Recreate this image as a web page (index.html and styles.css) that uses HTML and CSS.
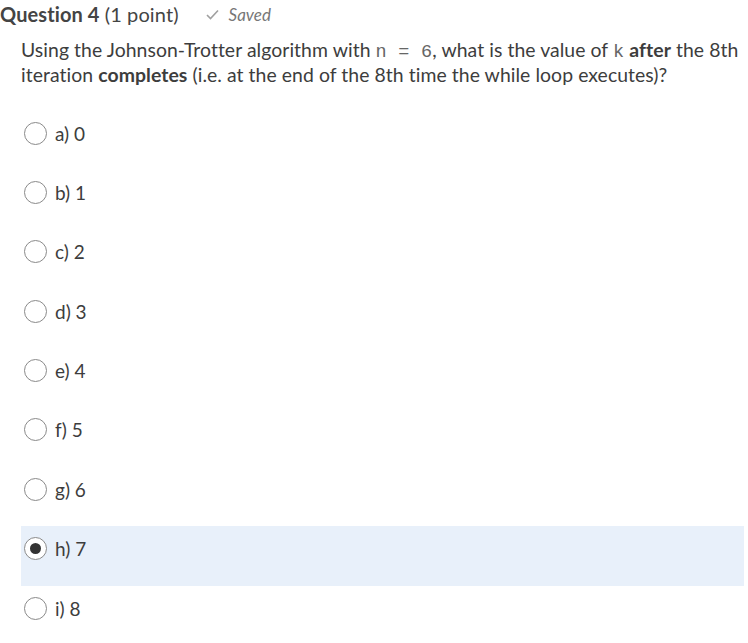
FILE: index.html
```html
<!DOCTYPE html>
<html>
<head>
<meta charset="utf-8">
<link rel="stylesheet" href="styles.css">
</head>
<body>
<div class="header">
  <span class="title"><b>Question 4</b> (1 point)</span>
  <span class="saved"><svg class="check" width="13" height="11" viewBox="0 0 13 11"><path d="M1 6 L4.5 9.5 L12 1.5" fill="none" stroke="#a0a0a0" stroke-width="1.6"/></svg>Saved</span>
</div>
<div class="question">
  <p>Using the Johnson-Trotter algorithm with <code>n = 6</code>, what is the value of <code>k</code> <b>after</b> the 8th iteration <b>completes</b> (i.e. at the end of the 8th time the while loop executes)?</p>
  <div class="answers">
    <div class="row"><span class="radio"></span><span class="label">a) 0</span></div>
    <div class="row"><span class="radio"></span><span class="label">b) 1</span></div>
    <div class="row"><span class="radio"></span><span class="label">c) 2</span></div>
    <div class="row"><span class="radio"></span><span class="label">d) 3</span></div>
    <div class="row"><span class="radio"></span><span class="label">e) 4</span></div>
    <div class="row"><span class="radio"></span><span class="label">f) 5</span></div>
    <div class="row"><span class="radio"></span><span class="label">g) 6</span></div>
    <div class="row selected"><span class="radio checked"></span><span class="label">h) 7</span></div>
    <div class="row"><span class="radio"></span><span class="label">i) 8</span></div>
  </div>
</div>
</body>
</html>
```
FILE: styles.css
```css
body {
  margin: 0;
  font-family: Lato, "Open Sans", sans-serif;
  color: #3d3d3d;
  background: #fff;
}
.header {
  display: flex;
  align-items: center;
  height: 28px;
}
.title {
  font-size: 20px;
  color: #444;
  letter-spacing: 0.1px;
}
.title b {
  font-weight: 700;
}
.saved {
  margin-left: 27px;
  font-size: 17px;
  font-style: italic;
  color: #777;
  display: flex;
  align-items: center;
  gap: 10px;
}
.question {
  padding: 0 4px 0 21px;
}
.question p {
  margin: 10px 0 0 0;
  font-size: 19.4px;
  line-height: 24px;
  letter-spacing: 0.06px;
  color: #3d3d3d;
}
.question code {
  font-family: "Liberation Mono", "DejaVu Sans Mono", monospace;
  font-size: 18.5px;
  line-height: 1;
  letter-spacing: 0.25px;
  color: #666;
  white-space: pre;
}
.answers {
  margin-top: 24px;
}
.row {
  height: 59.4px;
  display: flex;
  align-items: flex-start;
  padding-top: 11px;
  box-sizing: border-box;
}
.row.selected {
  background: #e8f0fa;
}
.radio {
  width: 23px;
  height: 23px;
  border: 1px solid #8a8a8a;
  border-radius: 50%;
  margin-left: 3px;
  box-sizing: border-box;
  background: #fff;
  display: flex;
  align-items: center;
  justify-content: center;
  flex: none;
}
.radio.checked::after {
  content: "";
  width: 11px;
  height: 11px;
  border-radius: 50%;
  background: #333;
}
.label {
  margin-left: 8px;
  font-size: 19px;
  line-height: 23px;
  color: #3d3d3d;
}
```
